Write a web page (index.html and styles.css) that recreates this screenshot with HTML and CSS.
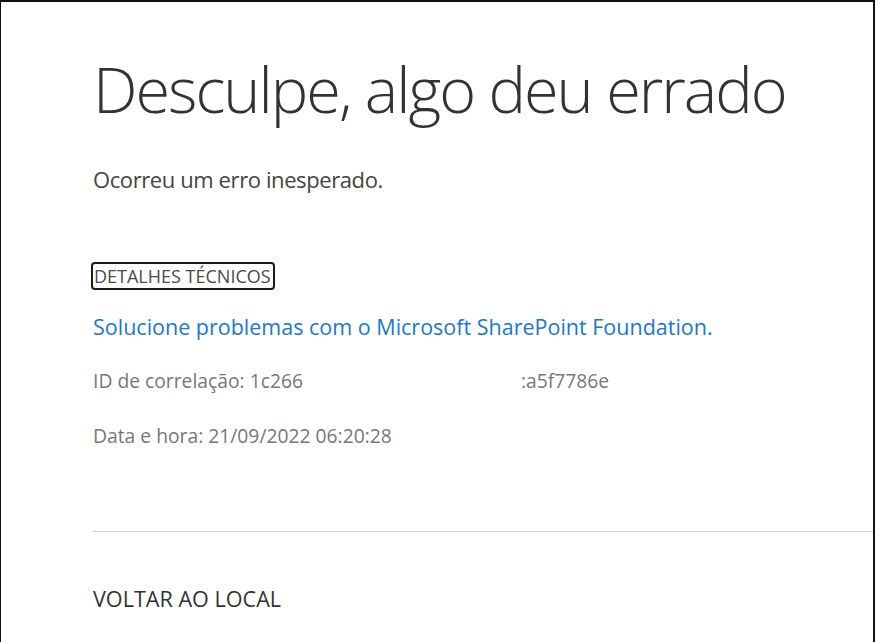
FILE: index.html
```html
<!DOCTYPE html>
<html lang="pt-BR">
<head>
    <meta charset="UTF-8">
    <meta name="viewport" content="width=device-width, initial-scale=1.0">
    <title>Erro</title>
    <link rel="stylesheet" href="styles.css">
</head>
<body>

    <div class="page">
        <h1 class="page-title">Desculpe, algo deu errado</h1>

        <p class="error-message">Ocorreu um erro inesperado.</p>

        <div class="details">
            <button class="details-button">DETALHES TÉCNICOS</button>
        </div>

        <a class="help-link" href="#">Solucione problemas com o Microsoft SharePoint Foundation.</a>

        <p class="meta">ID de correlação: 1c266<span class="redacted"></span>:a5f7786e</p>
        <p class="meta meta-date">Data e hora: 21/09/2022 06:20:28</p>

        <hr class="divider">

        <a class="back-link" href="#">VOLTAR AO LOCAL</a>
    </div>

</body>
</html>
```

FILE: styles.css
```css
/* General Styles */
body {
    margin: 0;
    padding: 0;
    background-color: #ffffff;
    font-family: 'Open Sans', 'Liberation Sans', sans-serif;
    color: #444444;
}

.page {
    display: flex;
    flex-direction: column;
    align-items: flex-start;
    min-height: 100vh;
    box-sizing: border-box;
    padding-left: 92px;
    border-top: 2px solid #111111;
    border-left: 1px solid #111111;
    border-right: 2px solid #111111;
}

.page-title {
    margin: 47px 0 0;
    font-size: 63px;
    line-height: 80px;
    font-weight: 300;
    letter-spacing: -2px;
    color: #333333;
}

.error-message {
    margin: 35px 0 0;
    font-size: 22px;
    line-height: 30px;
    letter-spacing: -0.4px;
    color: #444444;
}

/* Technical details toggle */
.details {
    margin-top: 68px;
}

.details-button {
    display: block;
    margin: 0 0 0 -2px;
    padding: 0 2px 0 1px;
    border: 2px solid #1a1a1a;
    border-radius: 4px;
    background: none;
    font-family: inherit;
    font-size: 18px;
    line-height: 24px;
    color: #4a4a4a;
    cursor: pointer;
}

.help-link {
    margin-top: 23px;
    font-size: 21.5px;
    line-height: 28px;
    color: #2277c6;
    text-decoration: none;
}

.meta {
    margin: 27px 0 0;
    font-size: 19.3px;
    line-height: 26px;
    color: #777777;
}

.meta-date {
    margin-top: 29px;
}

/* hidden part of the correlation id */
.redacted {
    display: inline-block;
    width: 218px;
}

.divider {
    align-self: stretch;
    margin: 82px 0 0;
    border: none;
    border-top: 1px solid #d4d4d4;
}

.back-link {
    margin-top: 53px;
    font-size: 21.6px;
    line-height: 28px;
    color: #333333;
    text-decoration: none;
}
```
